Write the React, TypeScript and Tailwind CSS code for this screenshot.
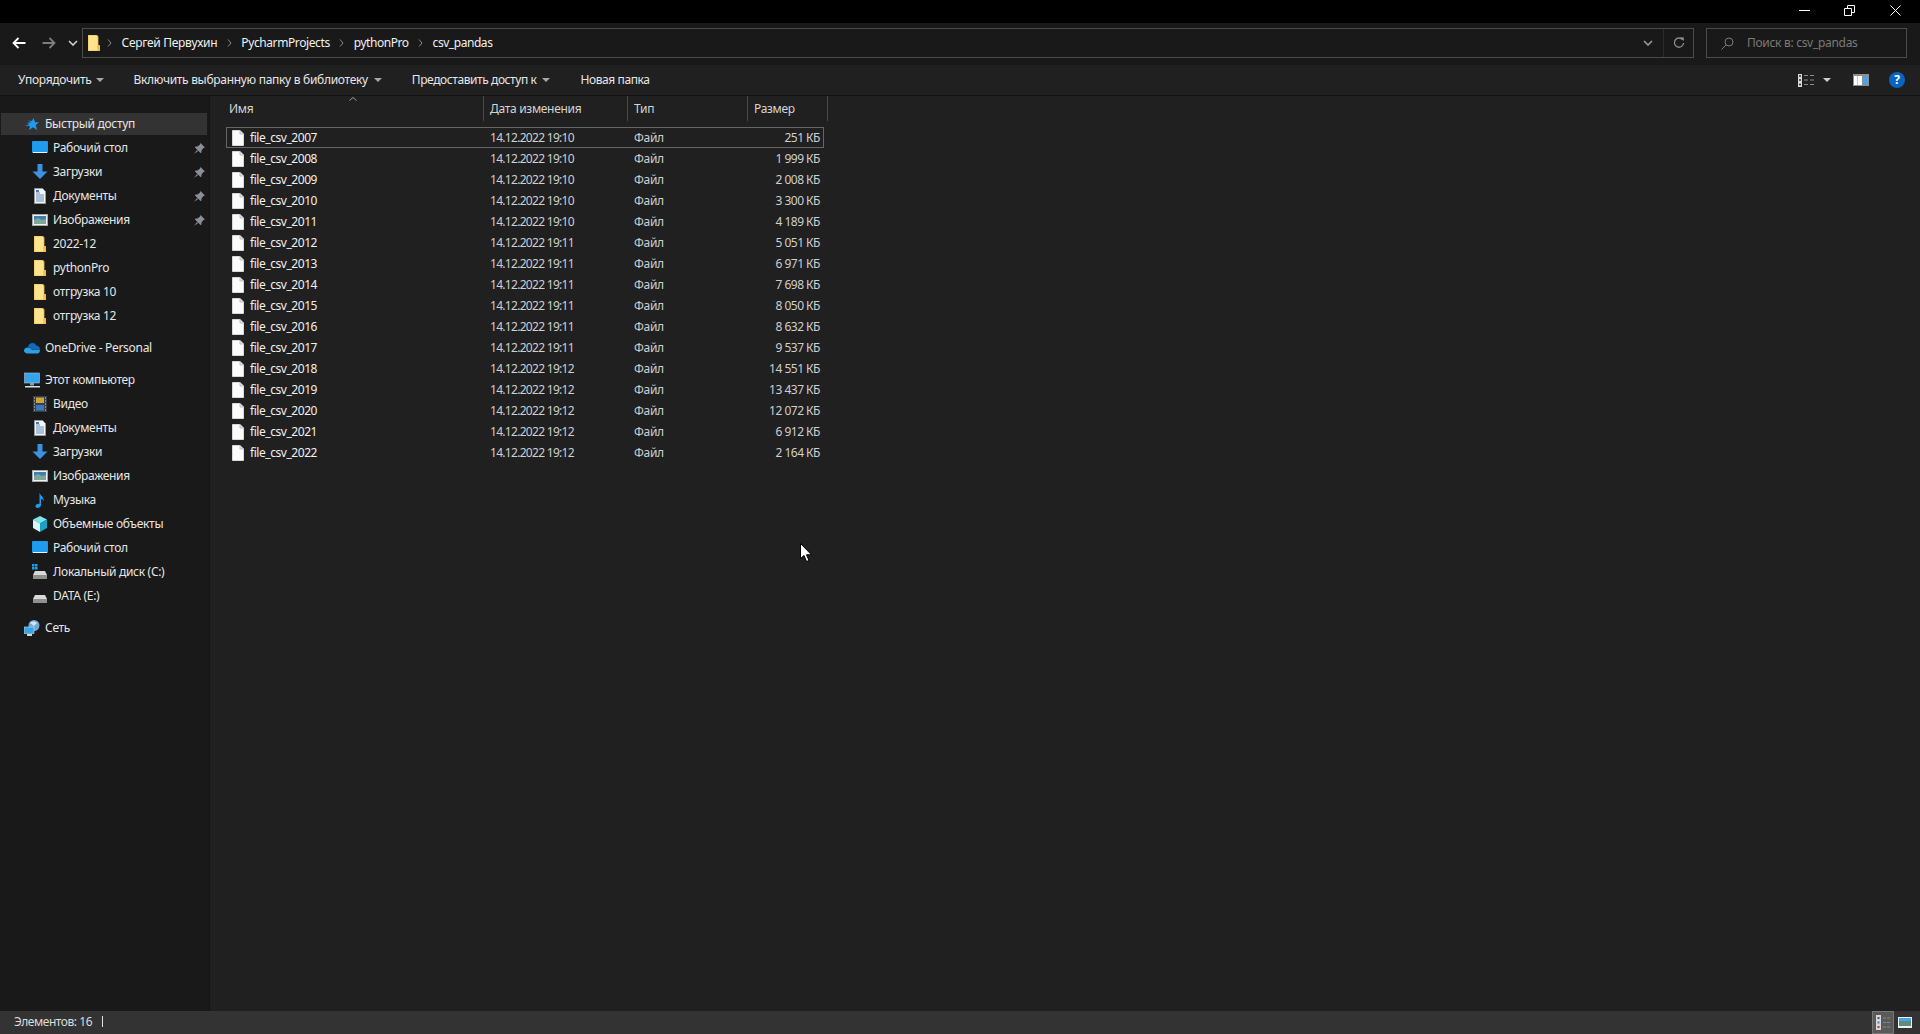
import type { ReactNode } from "react"

const files = [
  ["file_csv_2007", "14.12.2022 19:10", "251 КБ"],
  ["file_csv_2008", "14.12.2022 19:10", "1 999 КБ"],
  ["file_csv_2009", "14.12.2022 19:10", "2 008 КБ"],
  ["file_csv_2010", "14.12.2022 19:10", "3 300 КБ"],
  ["file_csv_2011", "14.12.2022 19:10", "4 189 КБ"],
  ["file_csv_2012", "14.12.2022 19:11", "5 051 КБ"],
  ["file_csv_2013", "14.12.2022 19:11", "6 971 КБ"],
  ["file_csv_2014", "14.12.2022 19:11", "7 698 КБ"],
  ["file_csv_2015", "14.12.2022 19:11", "8 050 КБ"],
  ["file_csv_2016", "14.12.2022 19:11", "8 632 КБ"],
  ["file_csv_2017", "14.12.2022 19:11", "9 537 КБ"],
  ["file_csv_2018", "14.12.2022 19:12", "14 551 КБ"],
  ["file_csv_2019", "14.12.2022 19:12", "13 437 КБ"],
  ["file_csv_2020", "14.12.2022 19:12", "12 072 КБ"],
  ["file_csv_2021", "14.12.2022 19:12", "6 912 КБ"],
  ["file_csv_2022", "14.12.2022 19:12", "2 164 КБ"],
]

// --- icons ---
const Svg = ({ w = 16, h = 16, vb, children }: { w?: number; h?: number; vb?: string; children: ReactNode }) => (
  <svg width={w} height={h} viewBox={vb ?? `0 0 ${w} ${h}`} className="shrink-0 block">
    {children}
  </svg>
)

const FileIcon = () => (
  <Svg w={12} h={16}>
    <path d="M0.5 0.5H8L11.5 4V15.5H0.5Z" fill="#fbfbfb" stroke="#d8d8d8" />
    <path d="M8 0.5V4H11.5" fill="#e4e4e4" stroke="#bdbdbd" />
  </Svg>
)

const Folder = ({ w = 12, h = 16 }: { w?: number; h?: number }) => (
  <Svg w={w} h={h} vb="0 0 12 16">
    <path d="M0 0H8.5L10 1.5V16H0Z" fill="#ffe38f" stroke="#e9b949" strokeWidth="0.8" />
    <path d="M10 1.5V16H12V10H10" fill="#e8b23f" />
    <rect x="9.5" y="11" width="2.5" height="5" fill="#f0bd47" />
  </Svg>
)

const Desktop = () => (
  <Svg>
    <rect x="0" y="1" width="16" height="12" rx="1" fill="#1c97ea" />
    <rect x="1" y="2" width="14" height="9.5" fill="#1f9bf0" />
    <rect x="1" y="12" width="14" height="1" fill="#e8f4fc" />
  </Svg>
)

const Downloads = () => (
  <Svg>
    <path d="M5.5 0H10.5V7.5H15.5L8 15L0.5 7.5H5.5Z" fill="#3a92e0" />
  </Svg>
)

const Docs = () => (
  <Svg>
    <path d="M2.5 0.5H10.5L13.5 3.5V15.5H2.5Z" fill="#f4f4f4" stroke="#9a9a9a" />
    <path d="M4 5H8M4 7H12M4 9H12M4 11H12M4 13H12" stroke="#5e8fc0" strokeWidth="1" />
    <rect x="4" y="2" width="3" height="2" fill="#2f7fce" />
  </Svg>
)

const Pictures = () => (
  <Svg>
    <rect x="0.5" y="2.5" width="15" height="11" fill="#efefef" stroke="#a8a8a8" />
    <rect x="2" y="4" width="12" height="4" fill="#3f7fb5" />
    <path d="M2 8L6 6L10 8L14 7V12H2Z" fill="#7fa596" />
  </Svg>
)

const Video = () => (
  <Svg>
    <rect x="1" y="0" width="14" height="16" fill="#3a3f48" />
    <rect x="4" y="1.5" width="8" height="5.5" fill="#c9a83a" />
    <rect x="4" y="9" width="8" height="5.5" fill="#3a78c2" />
    <path d="M2 2H3M2 5H3M2 8H3M2 11H3M2 14H3M13 2H14M13 5H14M13 8H14M13 11H14M13 14H14" stroke="#cfd3da" />
  </Svg>
)

const Music = () => (
  <Svg>
    <path d="M7.5 0.5C8.5 4 12 5 12 9C11 7.5 9.8 7 9 6.8V13C9 15 7 16 5.5 16C4 16 3.2 15 3.5 13.8C3.9 12.4 6 11.3 7.5 11.8Z" fill="#1e9af0" />
  </Svg>
)

const Cube = () => (
  <Svg>
    <path d="M8 0L15 3.5L8 7.5L1 3.5Z" fill="#7fe3ee" />
    <path d="M1 3.5L8 7.5V16L1 12Z" fill="#d2f6f8" />
    <path d="M15 3.5L8 7.5V16L15 12Z" fill="#1ba3c6" />
  </Svg>
)

const Drive = ({ win }: { win?: boolean }) => (
  <Svg>
    <path d="M3 7H13L15 11H1Z" fill="#d9d9d9" />
    <rect x="1" y="11" width="14" height="4" fill="#8f8f8f" />
    <rect x="11" y="12.5" width="2" height="1" fill="#41d14f" />
    {win && (
      <g fill="#1aa0f0">
        <rect x="0" y="0" width="2.5" height="2.5" />
        <rect x="3" y="0" width="2.5" height="2.5" />
        <rect x="0" y="3" width="2.5" height="2.5" />
        <rect x="3" y="3" width="2.5" height="2.5" />
      </g>
    )}
  </Svg>
)

// star with a comet tail on its left
const Star = () => (
  <Svg w={14} h={13}>
    <path d="M8.5 0L10 4.2H14L10.8 7L12 12L8 9.2L4 12L5 8L0 7.5L4.6 6.2L1.5 4.8L6.5 4.4L3 2.4L7 3Z" fill="#1e9cf0" />
  </Svg>
)

const Cloud = () => (
  <Svg w={16} h={12}>
    <path d="M4 5C4.5 2 7 0.5 9.2 1C10.5 1.3 11.5 2.2 12 3.5C14 3.5 15.8 5 16 7H7C6 5.8 5 5.2 4 5Z" fill="#0f6cbd" />
    <path d="M3.5 11.5C1.5 11.5 0 10.2 0 8.6C0 7 1.5 5.6 3.5 5.6C5 5.6 6.3 6.2 7.5 7.5H16C16 10 15 11.5 13.5 11.5Z" fill="#2b9fe8" />
  </Svg>
)

const Computer = () => (
  <Svg>
    <rect x="0.5" y="1" width="15" height="10" fill="#36a4ea" stroke="#a9c4d6" strokeWidth="0.6" />
    <rect x="6" y="11" width="4" height="2.5" fill="#8aa0ae" />
    <rect x="1" y="14" width="15" height="1.5" fill="#d7dde1" />
  </Svg>
)

const Network = () => (
  <Svg>
    <circle cx="10" cy="5.5" r="5.5" fill="#6fa8d6" />
    <path d="M6 3C8 1 11 1 13 3L10 6Z" fill="#cfe6f7" />
    <rect x="0" y="7" width="10" height="6.5" fill="#36a4ea" stroke="#cfdce5" strokeWidth="0.6" />
    <rect x="3" y="14" width="5" height="2" fill="#d0d6da" />
  </Svg>
)

const Pin = () => (
  <Svg w={11} h={11}>
    <path d="M6.5 0L11 4.5L9.5 5L7.5 7.5L7.5 9.5L6.5 10L1 4.5L1.5 3.5L3.5 3.5L6 1.5Z" fill="#8b8f93" />
    <path d="M3 7L0 11L4 8Z" fill="#8b8f93" />
  </Svg>
)

const Caret = ({ color = "#a6a6a6" }: { color?: string }) => (
  <svg width="8" height="4" viewBox="0 0 8 4" className="shrink-0 block">
    <path d="M0 0H8L4 4Z" fill={color} />
  </svg>
)

const Crumb = () => (
  <svg width="5" height="8" viewBox="0 0 5 8" className="shrink-0 block mx-[9.5px]">
    <path d="M1 0.5L4 4L1 7.5" fill="none" stroke="#8a8a8a" />
  </svg>
)

const Chevron = ({ color = "#9a9a9a" }: { color?: string }) => (
  <svg width="10" height="6" viewBox="0 0 10 6" className="shrink-0 block">
    <path d="M1 1L5 5L9 1" fill="none" stroke={color} strokeWidth="1.6" />
  </svg>
)

// --- sidebar ---
const SideItem = ({ icon, label, pin }: { icon: ReactNode; label: string; pin?: boolean }) => (
  <div className="h-[24px] flex items-center pl-[32px] pr-[4px]">
    <div className="w-[16px] flex justify-center">{icon}</div>
    <span className="ml-[5px]">{label}</span>
    {pin && (
      <div className="ml-auto">
        <Pin />
      </div>
    )}
  </div>
)

const SideHead = ({ icon, label, active }: { icon: ReactNode; label: string; active?: boolean }) => (
  <div className={`h-[22px] flex items-center pl-[23px] ml-[1px] w-[206px] ${active ? "bg-[#333333]" : ""}`}>
    <div className="w-[16px] flex justify-center">{icon}</div>
    <span className="ml-[5px]">{label}</span>
  </div>
)

export default function App() {
  return (
    <div
      className="h-[1034px] w-[1920px] overflow-hidden flex flex-col relative bg-[#202020] text-[12px] text-[#e6e6e6] tracking-[-0.3px]"
      style={{ fontFamily: '"Noto Sans", "Open Sans", sans-serif' }}
    >
      {/* title bar */}
      <div className="h-[23px] bg-black flex justify-end items-start shrink-0">
        <div className="mt-[10px] w-[11px] h-px bg-white mr-[34px]" />
        <svg width="11" height="11" viewBox="0 0 11 11" className="mt-[5px] mr-[35px] block">
          <path d="M0.5 3.5H7.5V10.5H0.5ZM3.5 3.5V0.5H10.5V7.5H7.5" fill="none" stroke="#fff" />
        </svg>
        <svg width="11" height="11" viewBox="0 0 11 11" className="mt-[5px] mr-[19px] block">
          <path d="M0.5 0.5L10.5 10.5M10.5 0.5L0.5 10.5" fill="none" stroke="#fff" />
        </svg>
      </div>

      {/* address row */}
      <div className="h-[42px] bg-[#191919] flex items-start pt-[5px] shrink-0">
        <div className="w-[82px] h-[30px] flex items-center shrink-0">
          <svg width="14" height="12" viewBox="0 0 14 12" className="ml-[12px] block">
            <path d="M6.5 1L1.5 6L6.5 11M1.5 6H13.5" fill="none" stroke="#fff" strokeWidth="1.8" />
          </svg>
          <svg width="14" height="12" viewBox="0 0 14 12" className="ml-[16px] block">
            <path d="M7.5 1L12.5 6L7.5 11M12.5 6H0.5" fill="none" stroke="#7d7d7d" strokeWidth="1.8" />
          </svg>
          <div className="ml-[12px]">
            <Chevron color="#d0d0d0" />
          </div>
        </div>
        <div className="w-[1612px] h-[30px] border border-[#4b4b4b] bg-[#191919] flex items-center">
          <div className="ml-[5px]">
            <Folder />
          </div>
          <div className="-ml-[3px]">
            <Crumb />
          </div>
          <span className="text-[#f0f0f0] ml-[0.5px]">Сергей Первухин</span>
          <Crumb />
          <span className="text-[#f0f0f0] tracking-[-0.4px]">PycharmProjects</span>
          <Crumb />
          <span className="text-[#f0f0f0] tracking-[-0.45px]">pythonPro</span>
          <Crumb />
          <span className="text-[#f0f0f0] tracking-[-0.45px]">csv_pandas</span>
          <div className="ml-auto w-[31px] h-full flex items-center justify-center border-r border-[#2a2a2a]">
            <Chevron />
          </div>
          <div className="w-[29px] h-full flex items-center justify-center">
            <svg width="12" height="12" viewBox="0 0 12 12" className="block">
              <path d="M9.8 3A4.6 4.6 0 1 0 10.6 6" fill="none" stroke="#8c8c8c" strokeWidth="1.3" />
              <path d="M7.2 0.2L10.8 0.4V4Z" fill="#8c8c8c" />
            </svg>
          </div>
        </div>
        <div className="ml-[12px] w-[201px] h-[30px] border border-[#4b4b4b] flex items-center text-[#7a7a7a]">
          <svg width="13" height="13" viewBox="0 0 13 13" className="ml-[14px] block">
            <circle cx="8" cy="5" r="4" fill="none" stroke="#7a7a7a" />
            <path d="M5 8L0.5 12.5" stroke="#7a7a7a" />
          </svg>
          <span className="ml-[13px]">Поиск в: csv_pandas</span>
        </div>
      </div>

      {/* toolbar */}
      <div className="h-[31px] bg-[#202020] border-b border-[#111111] flex items-center shrink-0">
        <span className="ml-[18px]">Упорядочить</span>
        <div className="ml-[5px]">
          <Caret />
        </div>
        <span className="ml-[29px]">Включить выбранную папку в библиотеку</span>
        <div className="ml-[6px]">
          <Caret />
        </div>
        <span className="ml-[30px] tracking-[-0.42px]">Предоставить доступ к</span>
        <div className="ml-[6px]">
          <Caret />
        </div>
        <span className="ml-[30px] tracking-[-0.4px]">Новая папка</span>
        <div className="ml-auto flex items-center">
          <svg width="16" height="13" viewBox="0 0 16 13" className="block">
            <rect x="0" y="0" width="4" height="13" fill="#d8d8d8" />
            <path d="M1 2H3M1 6H3M1 10.5H3" stroke="#333" strokeWidth="1.5" />
            <path d="M6 1.5H10M12 1.5H16M6 6H10M12 6H16M6 10.5H10M12 10.5H16" stroke="#8a8a8a" />
          </svg>
          <div className="ml-[9px]">
            <Caret color="#d0d0d0" />
          </div>
          <svg width="16" height="12" viewBox="0 0 16 12" className="block ml-[22px]">
            <rect width="16" height="12" fill="#8f8f8f" />
            <rect x="1" y="2" width="3.5" height="9" fill="#fff" />
            <rect x="5" y="2" width="4" height="9" fill="#fff" />
            <rect x="10" y="2" width="5" height="9" fill="#4aa3e8" />
          </svg>
          <div className="w-[16px] h-[16px] rounded-full bg-[#0a63c2] text-white text-[12px] font-bold flex items-center justify-center ml-[20px] mr-[15px] tracking-normal leading-none">
            ?
          </div>
        </div>
      </div>

      {/* main area */}
      <div className="flex-1 flex min-h-0">
        <div className="w-[210px] shrink-0 bg-[#191919] border-r border-[#151515] pt-[17px]">
          <SideHead icon={<Star />} label="Быстрый доступ" active />
          <div className="h-px" />
          <SideItem icon={<Desktop />} label="Рабочий стол" pin />
          <SideItem icon={<Downloads />} label="Загрузки" pin />
          <SideItem icon={<Docs />} label="Документы" pin />
          <SideItem icon={<Pictures />} label="Изображения" pin />
          <SideItem icon={<Folder />} label="2022-12" />
          <SideItem icon={<Folder />} label="pythonPro" />
          <SideItem icon={<Folder />} label="отгрузка 10" />
          <SideItem icon={<Folder />} label="отгрузка 12" />
          <div className="h-[9px]" />
          <SideHead icon={<Cloud />} label="OneDrive - Personal" />
          <div className="h-[10px]" />
          <SideHead icon={<Computer />} label="Этот компьютер" />
          <div className="h-px" />
          <SideItem icon={<Video />} label="Видео" />
          <SideItem icon={<Docs />} label="Документы" />
          <SideItem icon={<Downloads />} label="Загрузки" />
          <SideItem icon={<Pictures />} label="Изображения" />
          <SideItem icon={<Music />} label="Музыка" />
          <SideItem icon={<Cube />} label="Объемные объекты" />
          <SideItem icon={<Desktop />} label="Рабочий стол" />
          <SideItem icon={<Drive win />} label="Локальный диск (C:)" />
          <SideItem icon={<Drive />} label="DATA (E:)" />
          <div className="h-[9px]" />
          <SideHead icon={<Network />} label="Сеть" />
        </div>

        <div className="flex-1 min-w-0 relative">
          <svg width="8" height="4" viewBox="0 0 8 4" className="absolute left-[139px] top-[1px] block">
            <path d="M0.5 3.5L4 0.5L7.5 3.5" fill="none" stroke="#9a9a9a" />
          </svg>
          {/* column headers */}
          <div className="h-[25px] flex ml-[16px] mb-[6px] text-[#d4d4d4]">
            <div className="w-[258px] border-r border-[#4a4a4a] pl-[3px] flex items-center">Имя</div>
            <div className="w-[144px] border-r border-[#4a4a4a] pl-[6px] flex items-center">Дата изменения</div>
            <div className="w-[120px] border-r border-[#4a4a4a] pl-[6px] flex items-center">Тип</div>
            <div className="w-[80px] border-r border-[#4a4a4a] pl-[6px] flex items-center">Размер</div>
          </div>
          {/* file rows */}
          <div className="ml-[16px] w-[598px]">
            {files.map(([name, date, size], i) => (
              <div
                key={name}
                className={`h-[21px] flex items-center border ${i === 0 ? "border-[#666666]" : "border-transparent"}`}
              >
                <div className="w-[263px] flex items-center pl-[5px]">
                  <FileIcon />
                  <span className="ml-[6px] text-[#f0f0f0] tracking-[-0.45px]">{name}</span>
                </div>
                <div className="w-[144px] text-[#cfcfcf] tracking-[-0.7px]">{date}</div>
                <div className="w-[120px] text-[#cfcfcf]">Файл</div>
                <div className="flex-1 text-right pr-[3px] text-[#cfcfcf] tracking-[-0.5px]">{size}</div>
              </div>
            ))}
          </div>
        </div>
      </div>

      {/* status bar */}
      <div className="h-[23px] bg-[#333333] flex items-center shrink-0 text-[#dcdcdc]">
        <span className="ml-[14px] mb-[2px] tracking-[-0.45px]">Элементов: 16</span>
        <div className="ml-[10px] mb-[2px] w-px h-[11px] bg-[#e0e0e0]" />
        <div className="ml-auto w-[22px] h-full bg-[#5a5a5a] border border-[#777777] flex items-center justify-center">
          <svg width="14" height="15" viewBox="0 0 14 15" className="block">
            <rect width="5" height="15" fill="#d8d8d8" />
            <rect x="1.5" y="2" width="2" height="2" fill="#555" />
            <rect x="1.5" y="6.5" width="2" height="2" fill="#2f86d8" />
            <rect x="1.5" y="11" width="2" height="2" fill="#c03a2b" />
            <path d="M7 3H10M11 3H14M7 7.5H10M11 7.5H14M7 12H10M11 12H14" stroke="#8a8a8a" />
          </svg>
        </div>
        <div className="ml-[4px] mr-[8px] w-[14px] h-[11px] bg-[#f0f0f0] p-px">
          <div className="w-full h-[3px] bg-[#4aa3e8]" />
          <div className="w-full h-[5px] bg-[#5f8c7a]" />
        </div>
      </div>

      {/* mouse pointer */}
      <svg width="13" height="20" viewBox="0 0 13 20" className="absolute left-[800px] top-[543px] block">
        <path d="M0.5 0.5V15.5L4 12.5L6.5 18.5L9 17.5L6.5 11.8H11.5Z" fill="#fff" stroke="#000" />
      </svg>
    </div>
  )
}
